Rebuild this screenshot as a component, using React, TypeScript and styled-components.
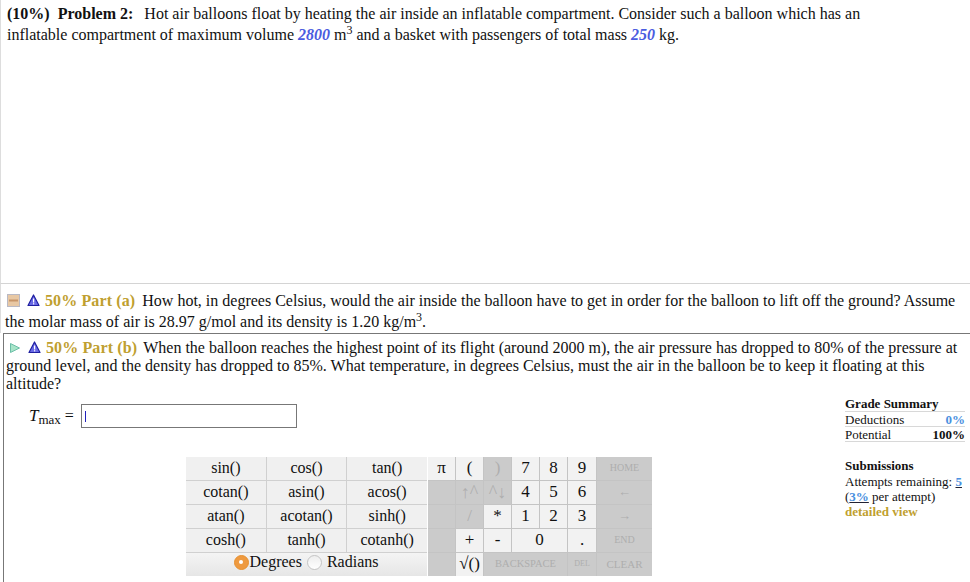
import React from "react";
import styled, { createGlobalStyle } from "styled-components";

const Global = createGlobalStyle`
  html, body { margin: 0; padding: 0; background: #fff; }
  body { font-family: "Liberation Serif", "Times New Roman", serif; color: #111; }
`;
const Page = styled.div`
  width: 970px; height: 582px; overflow: hidden; display: flex; flex-direction: column;
  font-size: 16px; line-height: 20px;
`;
const Problem = styled.section`
  height: 284px; box-sizing: border-box; padding: 3px 100px 0 6px; line-height: 21px; border-left: 1px solid #ddd;
  border-bottom: 1px solid #d4d4d4;
`;
const Bold = styled.b`margin-right: ${(p: { $gap?: number }) => p.$gap ?? 0}px;`;
const Value = styled.i`color: #4a5ce0; font-weight: bold;`;
const Sup = styled.sup`font-size: 12px; line-height: 0;`;
const PartA = styled.section`
  height: 49px; box-sizing: border-box; padding: 6px 8px 0 4px; line-height: 21px; border-left: 1px solid #ddd;
`;
const PartB = styled.section`
  flex: 1; display: flex; flex-direction: column; box-sizing: border-box; border: 1px solid #777; border-right: 0; border-bottom: 0;
  padding: 5px 8px 0 2px; margin-left: 3px; line-height: 18px;
`;
const Label = styled.b<{ $gap: number }>`color: #bf9f30; letter-spacing: 0.12px; margin: 0 ${(p) => p.$gap}px 0 1px;`;
const Icon = styled.svg<{ $left?: number; $right?: number }>`
  display: inline-block; vertical-align: -1px;
  margin-left: ${(p) => p.$left ?? 0}px; margin-right: ${(p) => p.$right ?? 4}px;
`;
const Answer = styled.div`display: flex; align-items: center; height: 26px; margin: 10px 0 0 23px;`;
const Tvar = styled.span`font-style: italic; font-size: 17px;`;
const Sub = styled.span`font-size: 13px; position: relative; top: 4px; margin-right: 4px;`;
const Equals = styled.span`margin-right: 7px;`;
const Input = styled.div`
  width: 211px; height: 22px; border: 1px solid #777; display: flex; align-items: center; padding-left: 3px;
  &::before { content: ""; width: 1px; height: 11px; background: #2222bb; }
`;
const Lower = styled.div`display: flex; flex: 1; margin-top: -20px;`;
const KeyArea = styled.div`display: flex; gap: 1px; margin: 48px 0 0 180px; height: 119px;`;
const LeftKeys = styled.div`display: flex; flex-direction: column; width: 241px; background: #d0d0d0;`;
const FuncGrid = styled.div`display: grid; grid-template-columns: repeat(3, 1fr); grid-auto-rows: 23px; gap: 1px;`;
const FuncKey = styled.div`background: #f0f0f0; display: flex; align-items: center; justify-content: center; font-size: 16px; padding-bottom: 2px; box-sizing: border-box;`;
const Mode = styled.div`
  height: 24px; box-sizing: border-box; margin-top: 1px; padding: 0 0 5px 4px; background: linear-gradient(#f4f4f4, #e6e6e6);
  display: flex; align-items: center; justify-content: center; font-size: 16px;
`;
const Radio = styled.span<{ $on?: boolean }>`
  width: 15px; height: 15px; border-radius: 50%; box-sizing: border-box; margin: 0 1px 0 0; display: inline-flex; align-items: center; justify-content: center;
  background: ${(p) => (p.$on ? "#ee9a40" : "linear-gradient(#eee,#fff)")};
  border: 1px solid ${(p) => (p.$on ? "#e8912f" : "#c4c4c4")};
  &::after { content: ""; width: 4px; height: 4px; border-radius: 50%; background: ${(p) => (p.$on ? "#fff" : "transparent")}; }
`;
const RadioText = styled.span`margin-right: 5px;`;
const PadGrid = styled.div`
  display: grid; width: 224px; background: #c4c4c4; gap: 1px;
  grid-template-columns: 27px 27px 27px 27px 27px 28px 1fr; grid-auto-rows: 23px;
`;
const PadKey = styled.div<{ $span?: number; $on?: boolean; $small?: number }>`
  grid-column: span ${(p) => p.$span ?? 1};
  background: ${(p) => (p.$on ? "#f2f2f2" : "#cbcbcb")};
  color: ${(p) => (p.$on ? "#111" : "#aeaeae")};
  font-size: ${(p) => p.$small ?? 17}px;
  padding-bottom: 2px; box-sizing: border-box;
  display: flex; align-items: center; justify-content: center; white-space: nowrap;
`;
const Side = styled.aside`
  position: absolute; left: 845px; top: 396px; width: 120px; font-size: 13px; line-height: 15px;
`;
const SideHead = styled.div`font-weight: bold; border-bottom: 1px solid #d8d8d8; height: 15px; white-space: nowrap;`;
const SideRow = styled.div`display: flex; justify-content: space-between; border-bottom: 1px solid #d8d8d8; height: 14px;`;
const Blue = styled.b`color: #4a90e0;`;
const Dark = styled.b``;
const SubHead = styled(SideHead)`margin-top: 16px; border: 0; height: 16px;`;
const Line = styled.div`white-space: nowrap; line-height: 15px;`;
const Under = styled(Blue)`text-decoration: underline; text-decoration-color: #223;`;
const Detail = styled.b`color: #bf9f30; display: block; line-height: 15px;`;

const Warn = () => (
  <Icon width="13" height="13" viewBox="0 0 13 13">
    <path d="M6.5 1 L12 11.5 H1 Z" fill="#6a6ae6" stroke="#1f1fa0" strokeWidth="1.2" strokeLinejoin="round" />
    <rect x="6" y="4.5" width="1.2" height="4" fill="#fff" />
    <rect x="6" y="9.2" width="1.2" height="1.2" fill="#fff" />
  </Icon>
);
const Collapse = () => (
  <Icon width="13" height="13" viewBox="0 0 13 13" $left={2} $right={3}>
    <rect x="0.5" y="0.5" width="12" height="12" fill="#e8c8a4" stroke="#b9b9c4" />
    <rect x="2" y="5.5" width="9" height="2" fill="#c8966a" />
  </Icon>
);
const Expand = () => (
  <Icon width="12" height="12" viewBox="0 0 12 12" $left={3} $right={3}>
    <path d="M1.5 1.5 L10.5 6 L1.5 10.5 Z" fill="#a8e4c8" stroke="#6cbfa8" />
  </Icon>
);

const funcs = ["sin()", "cos()", "tan()", "cotan()", "asin()", "acos()", "atan()", "acotan()", "sinh()", "cosh()", "tanh()", "cotanh()"];
type Key = { t: string; on?: boolean; span?: number; small?: number };
const pad: Key[] = [
  { t: "π", on: true }, { t: "(", on: true }, { t: ")" }, { t: "7", on: true }, { t: "8", on: true }, { t: "9", on: true }, { t: "HOME", small: 10 },
  { t: "" }, { t: "↑^", small: 18 }, { t: "^↓", small: 18 }, { t: "4", on: true }, { t: "5", on: true }, { t: "6", on: true }, { t: "←", small: 13 },
  { t: "" }, { t: "/" }, { t: "*", on: true }, { t: "1", on: true }, { t: "2", on: true }, { t: "3", on: true }, { t: "→", small: 13 },
  { t: "" }, { t: "+", on: true }, { t: "-", on: true }, { t: "0", on: true, span: 2 }, { t: ".", on: true }, { t: "END", small: 10 },
  { t: "" }, { t: "√()", on: true }, { t: "BACKSPACE", span: 3, small: 10.5 }, { t: "DEL", small: 8 }, { t: "CLEAR", small: 11 },
];

export default function App() {
  return (
    <Page>
      <Global />
      <Problem>
        <Bold $gap={11}>(10%)&nbsp; Problem 2:</Bold>Hot air balloons float by heating the air inside an inflatable compartment. Consider such a balloon which has an inflatable compartment of maximum volume <Value>2800</Value> m<Sup>3</Sup> and a basket with passengers of total mass <Value>250</Value> kg.
      </Problem>
      <PartA>
        <Collapse /> <Warn /><Label $gap={7}>50% Part (a)</Label>How hot, in degrees Celsius, would the air inside the balloon have to get in order for the balloon to lift off the ground? Assume the molar mass of air is 28.97 g/mol and its density is 1.20 kg/m<Sup>3</Sup>.
      </PartA>
      <PartB>
        <div>
          <Expand /> <Warn /><Label $gap={6}>50% Part (b)</Label>When the balloon reaches the highest point of its flight (around 2000 m), the air pressure has dropped to 80% of the pressure at ground level, and the density has dropped to 85%. What temperature, in degrees Celsius, must the air in the balloon be to keep it floating at this altitude?
        </div>
        <Answer>
          <Tvar>T</Tvar><Sub>max</Sub><Equals>=</Equals><Input />
        </Answer>
        <Lower>
          <KeyArea>
            <LeftKeys>
              <FuncGrid>{funcs.map((f) => <FuncKey key={f}>{f}</FuncKey>)}</FuncGrid>
              <Mode><Radio $on /><RadioText>Degrees</RadioText><Radio /><RadioText>&nbsp;Radians</RadioText></Mode>
            </LeftKeys>
            <PadGrid>
              {pad.map((k, i) => <PadKey key={i} $on={k.on} $span={k.span} $small={k.small}>{k.t}</PadKey>)}
            </PadGrid>
          </KeyArea>
        </Lower>
      </PartB>
      <Side>
        <SideHead>Grade Summary</SideHead>
        <SideRow><span>Deductions</span><Blue>0%</Blue></SideRow>
        <SideRow><span>Potential</span><Dark>100%</Dark></SideRow>
        <SubHead>Submissions</SubHead>
        <Line>Attempts remaining: <Under>5</Under></Line>
        <Line>(<Under>3%</Under> per attempt)</Line>
        <Detail>detailed view</Detail>
      </Side>
    </Page>
  );
}
